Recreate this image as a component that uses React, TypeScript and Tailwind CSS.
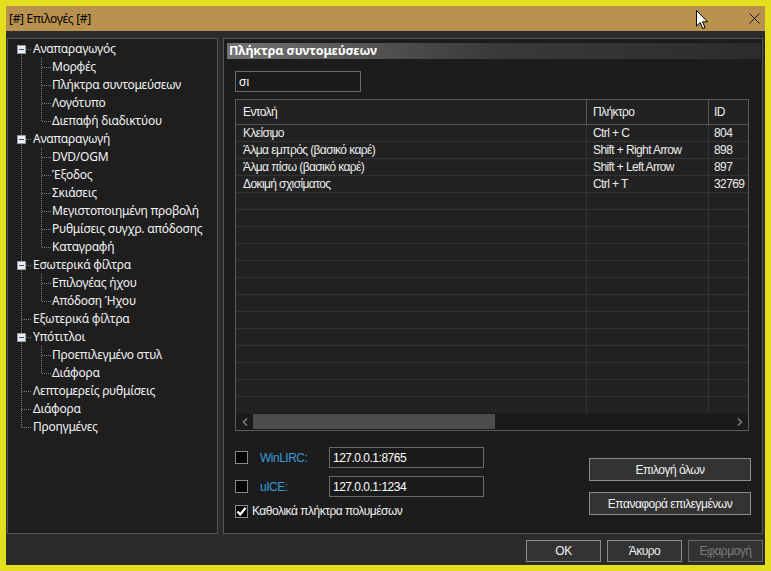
import React from 'react';

type TreeItem = {
  label: string;
  level: 0 | 1;
  box?: boolean;
  lastChild?: boolean;
};

const treeItems: TreeItem[] = [
  { label: 'Αναπαραγωγός', level: 0, box: true },
  { label: 'Μορφές', level: 1 },
  { label: 'Πλήκτρα συντομεύσεων', level: 1 },
  { label: 'Λογότυπο', level: 1 },
  { label: 'Διεπαφή διαδικτύου', level: 1, lastChild: true },
  { label: 'Αναπαραγωγή', level: 0, box: true },
  { label: 'DVD/OGM', level: 1 },
  { label: 'Έξοδος', level: 1 },
  { label: 'Σκιάσεις', level: 1 },
  { label: 'Μεγιστοποιημένη προβολή', level: 1 },
  { label: 'Ρυθμίσεις συγχρ. απόδοσης', level: 1 },
  { label: 'Καταγραφή', level: 1, lastChild: true },
  { label: 'Εσωτερικά φίλτρα', level: 0, box: true },
  { label: 'Επιλογέας ήχου', level: 1 },
  { label: 'Απόδοση Ήχου', level: 1, lastChild: true },
  { label: 'Εξωτερικά φίλτρα', level: 0 },
  { label: 'Υπότιτλοι', level: 0, box: true },
  { label: 'Προεπιλεγμένο στυλ', level: 1 },
  { label: 'Διάφορα', level: 1, lastChild: true },
  { label: 'Λεπτομερείς ρυθμίσεις', level: 0 },
  { label: 'Διάφορα', level: 0 },
  { label: 'Προηγμένες', level: 0 },
];

const shortcuts = [
  { cmd: 'Κλείσιμο', key: 'Ctrl + C', id: '804' },
  { cmd: 'Άλμα εμπρός (βασικό καρέ)', key: 'Shift + Right Arrow', id: '898' },
  { cmd: 'Άλμα πίσω (βασικό καρέ)', key: 'Shift + Left Arrow', id: '897' },
  { cmd: 'Δοκιμή σχισίματος', key: 'Ctrl + T', id: '32769' },
];

const uiFont = { fontFamily: '"Noto Sans", "Liberation Sans", sans-serif' };
// the grid and the small controls use a tighter face
const tightFont = { fontFamily: '"Liberation Sans", Arial, sans-serif' };

const DOT = '#7d7d7d';

const TreeRow: React.FC<{ item: TreeItem; first: boolean; last: boolean }> = ({ item, first, last }) => {
  const w = item.level === 0 ? 25 : 44;
  return (
    <div className="flex h-[18px] items-center">
      <svg width={w} height={18} className="shrink-0">
        {/* top level trunk */}
        <line
          x1={13.5}
          x2={13.5}
          y1={first ? 9 : 0}
          y2={last ? 9 : 18}
          stroke={DOT}
          strokeDasharray="1 1"
        />
        {item.level === 0 ? (
          <>
            <line x1={14} x2={23} y1={9.5} y2={9.5} stroke={DOT} strokeDasharray="1 1" />
            {item.box && (
              <>
                <rect x={9.5} y={5.5} width={8} height={8} fill="#eeeeee" stroke="#9a9a9a" />
                <line x1={11} x2={16} y1={9.5} y2={9.5} stroke="#2456b0" />
              </>
            )}
          </>
        ) : (
          <>
            <line
              x1={33.5}
              x2={33.5}
              y1={0}
              y2={item.lastChild ? 9.5 : 18}
              stroke={DOT}
              strokeDasharray="1 1"
            />
            <line x1={34} x2={43} y1={9.5} y2={9.5} stroke={DOT} strokeDasharray="1 1" />
          </>
        )}
      </svg>
      <span className="whitespace-nowrap text-[12px] leading-none tracking-[-0.25px] text-[#f2f2f2]">{item.label}</span>
    </div>
  );
};

const Checkbox: React.FC<{ checked?: boolean }> = ({ checked }) => (
  <div className="flex h-[13px] w-[13px] shrink-0 items-center justify-center border border-[#8a8a8a] bg-[#050505]">
    {checked && (
      <svg width="11" height="11" viewBox="0 0 11 11">
        <path d="M1.5 5.5 L4.2 8.5 L9.5 1.8" fill="none" stroke="#ffffff" strokeWidth="2.2" />
      </svg>
    )}
  </div>
);

const DarkButton: React.FC<{ className?: string; disabled?: boolean; children: React.ReactNode }> = ({
  className = '',
  disabled,
  children,
}) => (
  <div
    className={`flex items-center justify-center border bg-[#333333] text-[12px] tracking-[-0.5px] ${
      disabled ? 'border-[#6a6a6a] text-[#7c7c7c]' : 'border-[#8c8c8c] text-[#f0f0f0]'
    } ${className}`}
    style={tightFont}
  >
    {children}
  </div>
);

export default function App() {
  const emptyRows = 17 - shortcuts.length;

  return (
    <div className="relative flex h-[571px] w-[771px] flex-col bg-[#e4df1c] p-[6px]" style={uiFont}>
      {/* title bar */}
      <div className="flex h-[25px] shrink-0 items-center justify-between bg-[#b8914e] pl-[3px] pr-[5px]">
        <span className="text-[12px] tracking-[-0.3px] text-black">[#] Επιλογές [#]</span>
        <svg width="11" height="11" viewBox="0 0 11 11">
          <path d="M0.5 0.5 L10.5 10.5 M10.5 0.5 L0.5 10.5" stroke="#111" strokeWidth="1" />
        </svg>
      </div>

      {/* body */}
      <div className="flex flex-1 flex-col bg-[#2b2b2b] pb-[3px] pl-[1px] pr-[2px] pt-[7px]">
        <div className="flex h-[496px] gap-[5px]">
          {/* tree */}
          <div className="w-[211px] shrink-0 border border-[#555555] bg-[#1e1e1e] pt-[1px]">
            {treeItems.map((item, i) => (
              <TreeRow key={i} item={item} first={i === 0} last={i === treeItems.length - 1} />
            ))}
          </div>

          {/* right page */}
          <div className="flex w-[540px] flex-col border border-[#555555] bg-[#1c1c1c]">
            <div className="ml-[3px] mr-[1px] mt-[4px] flex h-[16px] items-center bg-gradient-to-r from-[#727272] via-[#3a3a3a] to-[#2c2c2c] pl-[2px]">
              <span className="text-[12.5px] font-bold leading-none tracking-[-0.1px] text-white">Πλήκτρα συντομεύσεων</span>
            </div>

            <div className="ml-[11px] mt-[12px] flex h-[21px] w-[126px] items-center border border-[#6a6a6a] bg-[#1a1a1a] pl-[3px]">
              <span className="text-[12px] leading-none text-white" style={tightFont}>
                σι
              </span>
            </div>

            {/* shortcuts table */}
            <div
              className="ml-[11px] mt-[7px] flex h-[332px] w-[514px] flex-col border border-[#5a5a5a] bg-[#222222] text-[12px] tracking-[-0.6px]"
              style={tightFont}
            >
              <div className="grid h-[25px] shrink-0 grid-cols-[351px_122px_1fr] border-b border-[#555555] text-[#f0f0f0]">
                <div className="flex items-center border-r border-[#555555] pl-[7px]">Εντολή</div>
                <div className="flex items-center border-r border-[#555555] pl-[6px]">Πλήκτρο</div>
                <div className="flex items-center pl-[5px]">ID</div>
              </div>
              <div className="h-[288px] shrink-0 overflow-hidden">
                {shortcuts.map((s) => (
                  <div key={s.id} className="grid h-[17px] grid-cols-[351px_122px_1fr] border-b border-[#343434] text-[#ececec]">
                    <div className="flex items-center border-r border-[#343434] pl-[7px] leading-none">{s.cmd}</div>
                    <div className="flex items-center border-r border-[#343434] pl-[6px] leading-none">{s.key}</div>
                    <div className="flex items-center pl-[5px] leading-none">{s.id}</div>
                  </div>
                ))}
                {Array.from({ length: emptyRows }).map((_, i) => (
                  <div key={i} className="grid h-[17px] grid-cols-[351px_122px_1fr] border-b border-[#343434]">
                    <div className="border-r border-[#343434]" />
                    <div className="border-r border-[#343434]" />
                    <div />
                  </div>
                ))}
              </div>
              <div className="flex h-[17px] shrink-0 items-center bg-[#1a1a1a]">
                <div className="flex w-[17px] items-center justify-center">
                  <svg width="6" height="8" viewBox="0 0 6 8">
                    <path d="M5 0.5 L1.5 4 L5 7.5" fill="none" stroke="#7a7a7a" strokeWidth="1.6" />
                  </svg>
                </div>
                <div className="h-[15px] w-[242px] bg-[#4d4d4d]" />
                <div className="flex-1" />
                <div className="flex w-[17px] items-center justify-center">
                  <svg width="6" height="8" viewBox="0 0 6 8">
                    <path d="M1 0.5 L4.5 4 L1 7.5" fill="none" stroke="#7a7a7a" strokeWidth="1.6" />
                  </svg>
                </div>
              </div>
            </div>

            {/* remote controls */}
            <div className="flex px-[11px] pt-[16px] text-[12px] tracking-[-0.5px]" style={tightFont}>
              <div className="flex flex-col">
                <div className="flex h-[21px] items-center">
                  <Checkbox />
                  <span className="ml-[12px] w-[69px] text-[#3a9ad8]">WinLIRC:</span>
                  <div className="flex h-[21px] w-[155px] items-center border border-[#6a6a6a] bg-[#1a1a1a] pl-[3px] text-white">
                    127.0.0.1:8765
                  </div>
                </div>
                <div className="mt-[8px] flex h-[21px] items-center">
                  <Checkbox />
                  <span className="ml-[12px] w-[69px] text-[#3a9ad8]">uICE:</span>
                  <div className="flex h-[21px] w-[155px] items-center border border-[#6a6a6a] bg-[#1a1a1a] pl-[3px] text-white">
                    127.0.0.1:1234
                  </div>
                </div>
                <div className="mt-[7px] flex h-[14px] items-center">
                  <Checkbox checked />
                  <span className="ml-[4px] whitespace-nowrap text-[#f0f0f0]">Καθολικά πλήκτρα πολυμέσων</span>
                </div>
              </div>
              <div className="ml-auto flex flex-col gap-[11px] pt-[11px]">
                <DarkButton className="h-[23px] w-[162px]">Επιλογή όλων</DarkButton>
                <DarkButton className="h-[23px] w-[162px]">Επαναφορά επιλεγμένων</DarkButton>
              </div>
            </div>
          </div>
        </div>

        {/* dialog buttons */}
        <div className="mt-[6px] flex h-[22px] justify-end gap-[6px]">
          <DarkButton className="w-[75px]">OK</DarkButton>
          <DarkButton className="w-[75px]">Άκυρο</DarkButton>
          <DarkButton className="w-[75px]" disabled>
            Ε<span className="underline">φ</span>αρμογή
          </DarkButton>
        </div>
      </div>

      {/* mouse pointer */}
      <svg className="absolute left-[696px] top-[10px]" width="13" height="20" viewBox="0 0 13 20">
        <path d="M0.5 0.5 L0.5 16 L4.2 12.5 L6.8 18.5 L9 17.5 L6.5 11.8 L11.5 11.8 Z" fill="#ffffff" stroke="#000000" strokeWidth="1" />
      </svg>
    </div>
  );
}
